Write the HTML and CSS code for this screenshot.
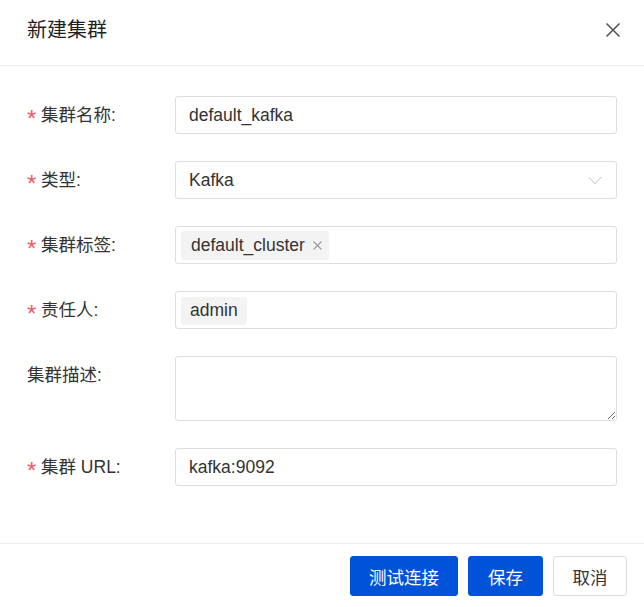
FILE: index.html
```html
<!DOCTYPE html>
<html lang="zh-CN">
<head>
<meta charset="utf-8">
<title>新建集群</title>
<link rel="stylesheet" href="styles.css">
</head>
<body>
<div class="dialog">
  <header class="dlg-head">
    <h2 class="dlg-title">新建集群</h2>
    <button class="dlg-close" type="button" aria-label="关闭">
      <svg width="16" height="16" viewBox="0 0 16 16"><path d="M1.5 1.5L14.5 14.5M14.5 1.5L1.5 14.5" stroke="#555" stroke-width="1.6" fill="none"/></svg>
    </button>
  </header>
  <form class="dlg-body">
    <div class="row">
      <label class="label"><span class="req">*</span>集群名称:</label>
      <input class="field" type="text" value="default_kafka">
    </div>
    <div class="row">
      <label class="label"><span class="req">*</span>类型:</label>
      <div class="field select">
        <span>Kafka</span>
        <svg class="chev" width="14" height="9" viewBox="0 0 14 9"><path d="M0.5 0.8L7 7.8L13.5 0.8" stroke="#c4c4c4" stroke-width="1" fill="none"/></svg>
      </div>
    </div>
    <div class="row">
      <label class="label"><span class="req">*</span>集群标签:</label>
      <div class="field tags">
        <span class="tag">default_cluster<svg class="tag-x" width="9" height="9" viewBox="0 0 9 9"><path d="M0.5 0.5L8.5 8.5M8.5 0.5L0.5 8.5" stroke="#9a9a9a" stroke-width="1.1" fill="none"/></svg></span>
      </div>
    </div>
    <div class="row">
      <label class="label"><span class="req">*</span>责任人:</label>
      <div class="field tags">
        <span class="tag tag-plain">admin</span>
      </div>
    </div>
    <div class="row row-top">
      <label class="label">集群描述:</label>
      <textarea class="field area"></textarea>
    </div>
    <div class="row">
      <label class="label"><span class="req">*</span>集群 URL:</label>
      <input class="field" type="text" value="kafka:9092">
    </div>
  </form>
  <footer class="dlg-foot">
    <button class="btn btn-primary" type="button">测试连接</button>
    <button class="btn btn-primary" type="button">保存</button>
    <button class="btn btn-default" type="button">取消</button>
  </footer>
</div>
</body>
</html>
```
FILE: styles.css
```css
* { box-sizing: border-box; }
html, body { margin: 0; padding: 0; background: #fff; }
body {
  font-family: "Liberation Sans", "Noto Sans CJK SC", sans-serif;
  color: #333;
}
.dialog {
  width: 644px;
  height: 607px;
  display: flex;
  flex-direction: column;
  background: #fff;
}
.dlg-head {
  height: 66px;
  flex: none;
  display: flex;
  align-items: center;
  justify-content: space-between;
  padding: 0 23px 5px 27px;
  border-bottom: 1px solid #eeeeee;
}
.dlg-title {
  margin: 0;
  font-size: 20px;
  font-weight: 400;
  color: #1f1f1f;
  line-height: 1;
}
.dlg-close {
  border: 0;
  background: none;
  padding: 0;
  width: 16px;
  height: 16px;
  display: flex;
}
.dlg-body {
  flex: 1;
  margin: 0;
  padding: 30px 27px 0 27px;
  display: flex;
  flex-direction: column;
  gap: 27px;
}
.row {
  display: flex;
  align-items: center;
}
.row-top { align-items: flex-start; }
.label {
  width: 148px;
  flex: none;
  font-size: 17.5px;
  line-height: 38px;
  color: #333;
  display: flex;
  align-items: center;
}
.req {
  color: #ef5a64;
  font-size: 24px;
  width: 14px;
  display: inline-block;
  transform: translateY(4px);
  line-height: 1;
}
.field {
  flex: 1;
  height: 38px;
  border: 1px solid #dedede;
  border-radius: 3px;
  font-family: "Liberation Sans", "Noto Sans CJK SC", sans-serif;
  font-size: 17.5px;
  color: #333;
  padding: 0 13px;
  background: #fff;
  outline: none;
  margin: 0;
}
.select {
  display: flex;
  align-items: center;
  justify-content: space-between;
  padding-right: 14px;
}
.tags {
  display: flex;
  align-items: center;
  padding: 0 5px;
}
.tag {
  height: 29px;
  display: inline-flex;
  align-items: center;
  background: #f3f3f3;
  border-radius: 3px;
  padding: 0 7px 0 10px;
  margin-top: 1px;
}
.tag-plain { padding: 0 9px 0 9px; height: 28px; }
.tag-x { margin-left: 8px; }
.area {
  height: 65px;
  resize: vertical;
  padding: 8px 13px;
  display: block;
}
.dlg-foot {
  height: 64px;
  flex: none;
  border-top: 1px solid #eeeeee;
  display: flex;
  justify-content: flex-end;
  align-items: flex-start;
  gap: 10px;
  padding: 12px 17px 0 0;
}
.btn {
  height: 40px;
  min-width: 74px;
  padding: 0 18px;
  font-family: "Liberation Sans", "Noto Sans CJK SC", sans-serif;
  font-size: 17.5px;
  border-radius: 3px;
  cursor: pointer;
}
.btn-primary {
  background: #0052d9;
  border: 1px solid #0052d9;
  color: #fff;
  min-width: 75px;
}
.btn-default {
  background: #fff;
  border: 1px solid #dcdcdc;
  color: #333;
}
```
